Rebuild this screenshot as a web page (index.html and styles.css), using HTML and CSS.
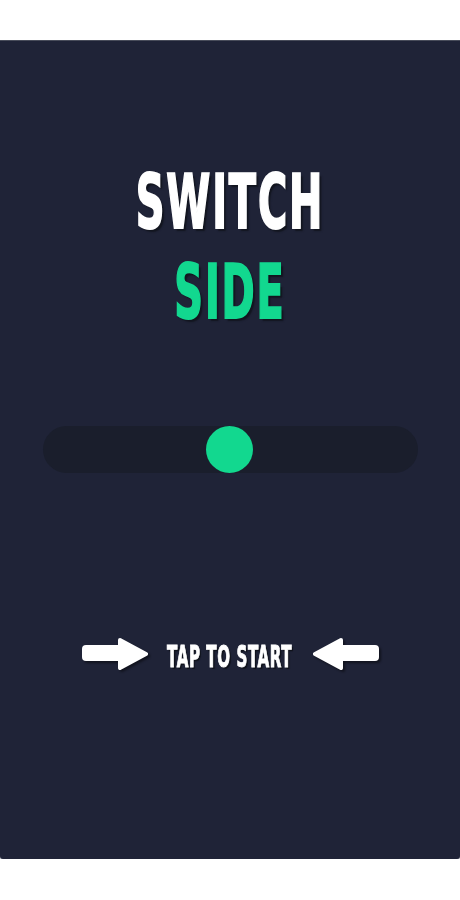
FILE: index.html
```html
<!DOCTYPE html>
<html lang="en">
<head>
    <meta charset="UTF-8">
    <meta name="viewport" content="width=device-width, initial-scale=1.0">
    <title>Switch Side</title>
    <link rel="stylesheet" href="styles.css">
</head>
<body>
    <!-- Game screen -->
    <div class="game">
        <!-- Title -->
        <h1 class="title">
            <span class="title-line">SWITCH</span>
            <span class="title-line green">SIDE</span>
        </h1>

        <!-- Slider track with the ball -->
        <div class="track">
            <div class="ball"></div>
        </div>

        <!-- Start prompt -->
        <div class="start">
            <svg class="arrow" width="66" height="32" viewBox="0 0 66 32">
                <rect x="0" y="7" width="42" height="16" rx="4" fill="#fff"/>
                <polygon points="38,2 64,16 38,30" fill="#fff" stroke="#fff" stroke-width="4" stroke-linejoin="round"/>
            </svg>
            <div class="start-label"><span>TAP TO START</span></div>
            <svg class="arrow flip" width="66" height="32" viewBox="0 0 66 32">
                <rect x="0" y="7" width="42" height="16" rx="4" fill="#fff"/>
                <polygon points="38,2 64,16 38,30" fill="#fff" stroke="#fff" stroke-width="4" stroke-linejoin="round"/>
            </svg>
        </div>
    </div>
</body>
</html>
```

FILE: styles.css
```css
/* Switch Side start screen */
body {
    margin: 0;
    padding: 0;
    background-color: #fff;
    font-family: "DejaVu Sans Condensed", "DejaVu Sans", sans-serif;
    font-stretch: condensed;
}
.game {
    margin-top: 40px;
    height: 818px;
    background-color: #1f2337;
    border-top: 1px solid #484c5a;
    border-radius: 0 0 3px 3px;
    box-shadow: 0 1px 0 #b4b6bc;
    overflow: hidden;
}
.title {
    margin: 116px 0 0;
    font-size: 74px;
    font-weight: bold;
    line-height: 90px;
}
.title-line {
    display: block;
    text-align: center;
    color: #fff;
    letter-spacing: 3px;
    transform: scaleX(0.6);
    -webkit-text-stroke: 2px #fff;
    text-shadow: 4px 3px 2px #12151f;
}
.title-line.green {
    color: #12d88f;
    -webkit-text-stroke-color: #12d88f;
}
.track {
    margin: 89px 42px 0 43px;
    height: 47px;
    border-radius: 24px;
    background-color: #1a1e2c;
    display: flex;
    justify-content: center;
}
.ball {
    width: 47px;
    height: 47px;
    margin-right: 2px;
    border-radius: 50%;
    background-color: #12d88f;
}
.start {
    margin-top: 165px;
    display: flex;
    justify-content: center;
    align-items: flex-start;
    gap: 18px;
}
.arrow {
    display: block;
    filter: drop-shadow(2px 2px 1px rgba(0, 0, 0, 0.45));
}
.arrow.flip {
    transform: scaleX(-1);
    filter: drop-shadow(-2px 2px 1px rgba(0, 0, 0, 0.45));
}
.start-label {
    width: 129px;
    display: flex;
    justify-content: center;
    margin-top: 3px;
}
.start-label span {
    display: inline-block;
    white-space: nowrap;
    color: #fff;
    font-size: 30px;
    font-weight: bold;
    line-height: 32px;
    letter-spacing: 1px;
    transform: scaleX(0.56);
    -webkit-text-stroke: 1px #fff;
    text-shadow: 3px 2px 1px #10131c;
}
```
